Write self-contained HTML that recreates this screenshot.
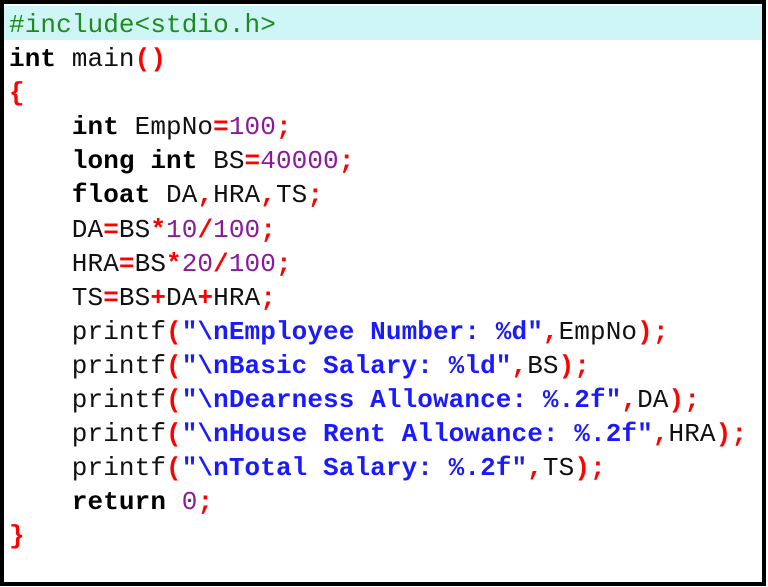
<!DOCTYPE html>
<html><head><meta charset="utf-8"><style>
html,body{margin:0;padding:0;background:#fff;}
body{width:768px;height:587px;overflow:hidden;position:relative;}
.frame{position:absolute;left:0;top:0;width:758px;height:578px;border:4px solid #000;background:#fff;}
.hl{position:absolute;left:4px;top:6px;width:758px;height:34px;background:#cef6f6;}
pre{position:absolute;left:9px;top:8px;margin:0;font-family:"Liberation Mono",monospace;font-size:26px;line-height:34.1px;color:#111;letter-spacing:0.1px;}
.k{font-weight:bold;color:#000;}
.r{color:#f00;font-weight:bold;}
.n{color:#8a1a9a;}
.s{color:#1a1aff;font-weight:bold;}
.g{color:#1f8a1f;}
</style></head><body>
<div class="frame"></div>
<div class="hl"></div>
<pre><span class="g">#include&lt;stdio.h&gt;</span>
<span class="k">int</span> main<span class="r">()</span>
<span class="r">{</span>
    <span class="k">int</span> EmpNo<span class="r">=</span><span class="n">100</span><span class="r">;</span>
    <span class="k">long int</span> BS<span class="r">=</span><span class="n">40000</span><span class="r">;</span>
    <span class="k">float</span> DA<span class="r">,</span>HRA<span class="r">,</span>TS<span class="r">;</span>
    DA<span class="r">=</span>BS<span class="r">*</span><span class="n">10</span><span class="r">/</span><span class="n">100</span><span class="r">;</span>
    HRA<span class="r">=</span>BS<span class="r">*</span><span class="n">20</span><span class="r">/</span><span class="n">100</span><span class="r">;</span>
    TS<span class="r">=</span>BS<span class="r">+</span>DA<span class="r">+</span>HRA<span class="r">;</span>
    printf<span class="r">(</span><span class="s">"\nEmployee Number: %d"</span><span class="r">,</span>EmpNo<span class="r">);</span>
    printf<span class="r">(</span><span class="s">"\nBasic Salary: %ld"</span><span class="r">,</span>BS<span class="r">);</span>
    printf<span class="r">(</span><span class="s">"\nDearness Allowance: %.2f"</span><span class="r">,</span>DA<span class="r">);</span>
    printf<span class="r">(</span><span class="s">"\nHouse Rent Allowance: %.2f"</span><span class="r">,</span>HRA<span class="r">);</span>
    printf<span class="r">(</span><span class="s">"\nTotal Salary: %.2f"</span><span class="r">,</span>TS<span class="r">);</span>
    <span class="k">return</span> <span class="n">0</span><span class="r">;</span>
<span class="r">}</span></pre>
</body></html>
